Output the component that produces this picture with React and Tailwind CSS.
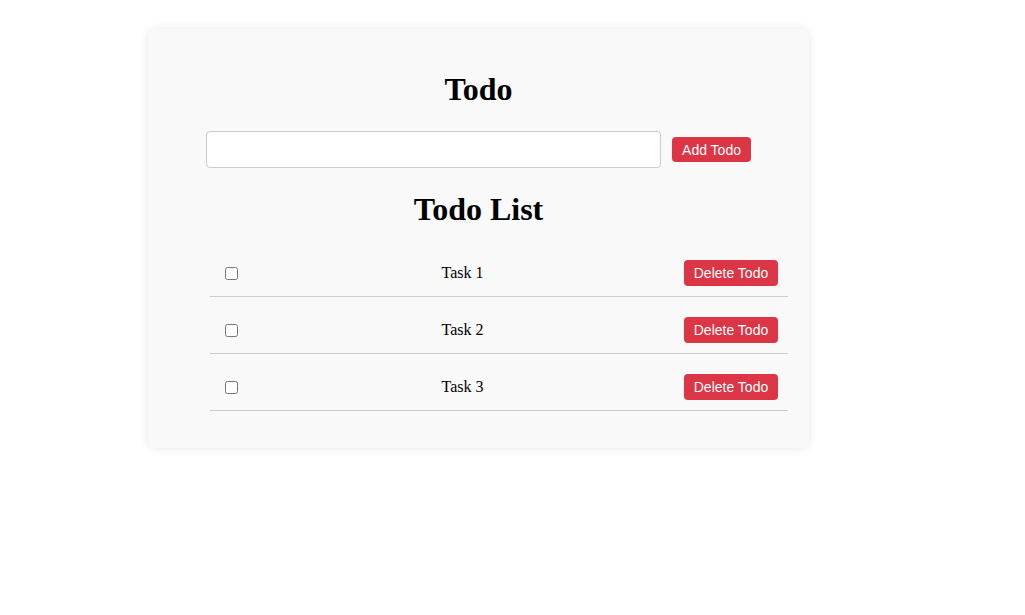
import React, { useState } from "react";

export default function App() {
  const [todos, setTodos] = useState([
    { id: 1, text: "Task 1", done: false },
    { id: 2, text: "Task 2", done: false },
    { id: 3, text: "Task 3", done: false },
  ]);
  const [value, setValue] = useState("");

  const add = () => {
    if (!value.trim()) return;
    setTodos([...todos, { id: Date.now(), text: value, done: false }]);
    setValue("");
  };

  return (
    <div className="min-h-[615px] bg-white pt-[29px] font-['Liberation_Serif',serif] text-black">
      <div className="ml-[148px] w-[661px] rounded-[8px] bg-[#f9f9f9] pt-[42px] pb-[37px] shadow-[0_0_10px_rgba(0,0,0,0.1)]">
        <h1 className="h-[37px] text-center text-[32px] font-bold leading-[37px]">Todo</h1>
        <div className="mt-[23px] flex items-center justify-center">
          <input
            type="text"
            value={value}
            onChange={(e) => setValue(e.target.value)}
            className="h-[37px] w-[455px] rounded-[4px] border border-[#ccc] bg-white px-[10px] font-['Liberation_Sans',sans-serif] text-[13.33px] outline-none"
          />
          <button
            onClick={add}
            className="ml-[11px] h-[25px] w-[79px] rounded-[4px] bg-[#dc3545] font-['Liberation_Sans',sans-serif] text-[14px] leading-[16px] text-white"
          >
            Add Todo
          </button>
        </div>
        <h2 className="mt-[23px] h-[37px] text-center text-[32px] font-bold leading-[37px]">Todo List</h2>
        <ul className="mt-[12px] ml-[62px] mr-[21px]">
          {todos.map((t) => (
            <li
              key={t.id}
              className="flex h-[57px] items-center justify-between border-b border-[#ccc] pt-[20px] pb-[10px] pl-[11px] pr-[10px]"
            >
              <input
                type="checkbox"
                checked={t.done}
                onChange={() =>
                  setTodos(todos.map((x) => (x.id === t.id ? { ...x, done: !x.done } : x)))
                }
                className="ml-[4px] mr-[3px] h-[13px] w-[13px]"
              />
              <span className="text-[16px] leading-[18px]">{t.text}</span>
              <button
                onClick={() => setTodos(todos.filter((x) => x.id !== t.id))}
                className="h-[26px] w-[94px] rounded-[4px] bg-[#dc3545] font-['Liberation_Sans',sans-serif] text-[14px] leading-[16px] text-white"
              >
                Delete Todo
              </button>
            </li>
          ))}
        </ul>
      </div>
    </div>
  );
}
